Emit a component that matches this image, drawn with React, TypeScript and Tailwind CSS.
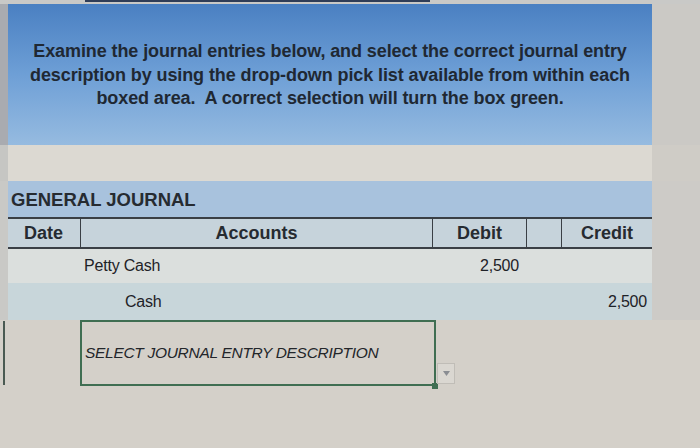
export default function App() {
  return (
    <div className="w-[700px] h-[448px] overflow-hidden bg-[#d1cdc6] flex flex-col font-['Liberation_Sans',Arial,sans-serif] text-[#1e2227]">
      {/* top strip */}
      <div className="h-[4px] flex bg-[#c9c9c7]">
        <div className="ml-[85px] w-[345px] h-[2px] bg-[#2f3d58]" />
      </div>

      {/* instructions box */}
      <div className="flex h-[141px]">
        <div className="w-[8px] bg-[#a9abb0]" />
        <div className="w-[644px] bg-gradient-to-b from-[#4a80c2] via-[#6e9fd6] to-[#96bbe0] flex flex-col items-center pt-[36px]">
          <p className="text-[18px] leading-[23.5px] font-bold text-center tracking-[-0.1px] text-[#1f2833]">
            Examine the journal entries below, and select the correct journal entry
            <br />
            description by using the drop-down pick list available from within each
            <br />
            boxed area.&nbsp; A correct selection will turn the box green.
          </p>
        </div>
        <div className="flex-1 bg-[#cbc9c5]" />
      </div>

      {/* spacer band */}
      <div className="flex h-[36px]">
        <div className="w-[8px] bg-[#c6c6c3]" />
        <div className="w-[644px] bg-[#dcd9d2]" />
        <div className="flex-1 bg-[#cfccc6]" />
      </div>

      {/* journal */}
      <div className="flex">
        <div className="w-[8px] bg-[#c9c9c6]" />
        <div className="w-[644px] flex flex-col">
          <div className="h-[36px] bg-[#a8c2dd] flex items-center pl-[3px] pt-[1px]">
            <span className="text-[18.5px] font-bold text-[#262b31]">GENERAL JOURNAL</span>
          </div>
          <div className="h-[32px] bg-[#c6d3db] border-y-2 border-[#3a3f45] flex text-[18px] font-bold text-[#262b31]">
            <div className="w-[73px] flex items-center pl-[16px] border-r border-[#3a3f45]">Date</div>
            <div className="w-[352px] flex items-center justify-center border-r border-[#3a3f45]">Accounts</div>
            <div className="w-[94px] flex items-center justify-center border-r border-[#3a3f45]">Debit</div>
            <div className="w-[35px] border-r border-[#3a3f45]" />
            <div className="flex-1 flex items-center justify-center">Credit</div>
          </div>
          <div className="h-[34px] bg-[#dbdfdd] flex items-center text-[16px] tracking-[-0.2px]">
            <span className="ml-[76px] w-[100px]">Petty Cash</span>
            <span className="ml-[259px] w-[76px] text-right">2,500</span>
          </div>
          <div className="h-[37px] bg-[#c8d6da] flex items-center text-[16px] tracking-[-0.2px]">
            <span className="ml-[117px] w-[60px]">Cash</span>
            <span className="flex-1 text-right pr-[5px]">2,500</span>
          </div>
        </div>
        <div className="flex-1 bg-[#cdcbc7]" />
      </div>

      {/* description select */}
      <div className="flex-1 flex items-start bg-[#d4d0c9]">
        <div className="ml-[3px] w-[2px] h-[64px] mt-[1px] bg-[#4a5a52]" />
        <div className="ml-[75px] relative">
          <div className="w-[356px] h-[66px] border-2 border-[#3f6e52] flex items-center pl-[3px] pb-[1px]">
            <span className="text-[15.5px] italic tracking-[-0.3px] text-[#23262a]">
              SELECT JOURNAL ENTRY DESCRIPTION
            </span>
          </div>
          <div className="absolute right-[-2px] bottom-[-3px] w-[6px] h-[6px] bg-[#3f6e52]" />
          <div className="absolute left-[357px] top-[43px] w-[18px] h-[21px] border border-[#c0bdb7] bg-[#dad7d1] flex items-center justify-center">
            <svg width="7" height="5" viewBox="0 0 7 5">
              <path d="M0 0 L7 0 L3.5 5 Z" fill="#8a8d92" />
            </svg>
          </div>
        </div>
      </div>
    </div>
  );
}
